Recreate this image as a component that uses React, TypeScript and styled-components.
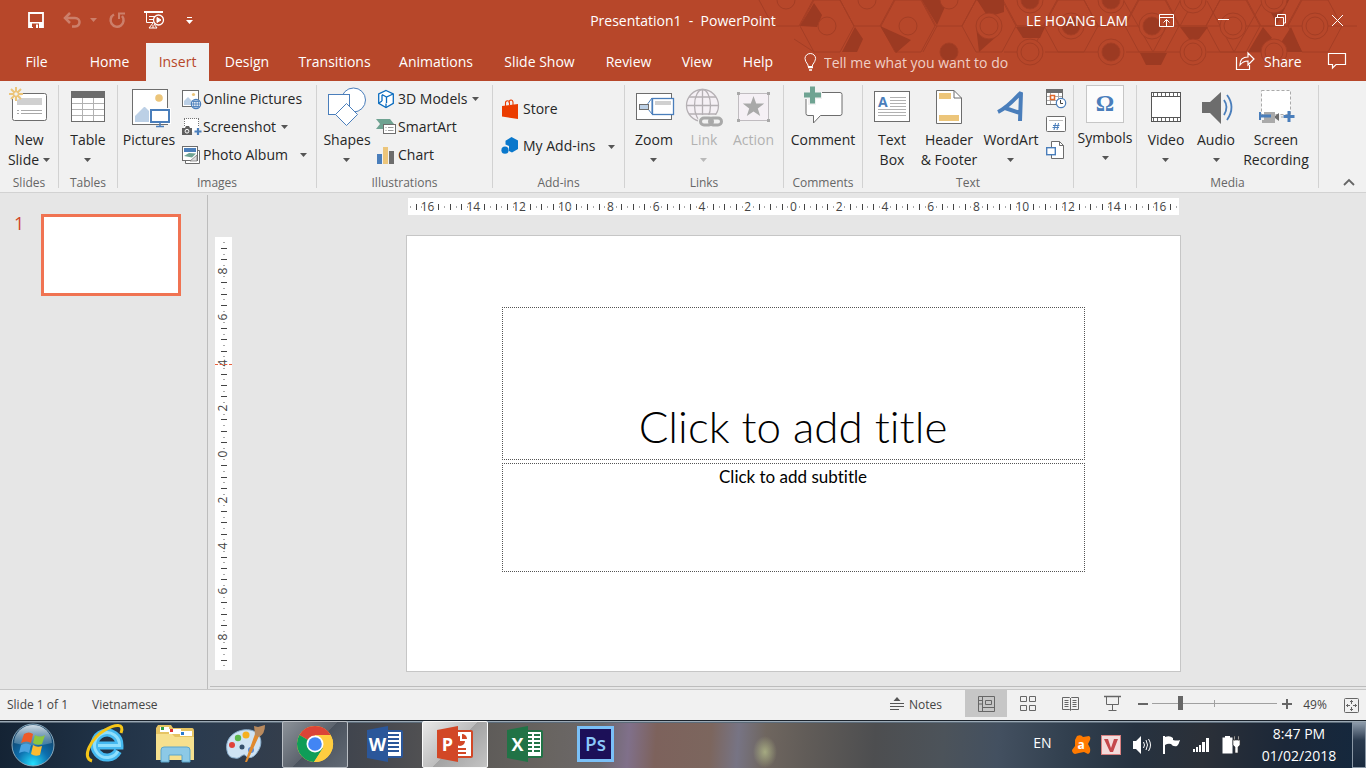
import React from "react";
import styled, { createGlobalStyle, css } from "styled-components";

const GlobalStyle = createGlobalStyle`
  *, *::before, *::after { box-sizing: border-box; }
  body { margin: 0; font-family: "Open Sans", "Noto Sans", sans-serif; font-size: 14px; color: #262626; }
  button { border: 0; background: none; padding: 0; margin: 0; font: inherit; color: inherit; }
  svg { display: block; flex: none; overflow: visible; }
  h1, p { margin: 0; font-weight: 400; }
`;

/* ---------- window frame ---------- */

const Screen = styled.div`
  display: flex;
  flex-direction: column;
  min-height: 100vh;
  background: #e6e6e6;
`;

const Header = styled.header`
  position: relative;
  background: #b7472a;
  color: #fff;
`;

const Pattern = styled.svg`
  position: absolute;
  top: 0;
  right: 0;
`;

const TitleBar = styled.div`
  position: relative;
  display: grid;
  grid-template-columns: 1fr auto 1fr;
  align-items: center;
  height: 40px;
`;

const QuickAccess = styled.div`
  display: flex;
  align-items: center;
  padding-left: 17px;
`;

const QuickButton = styled.button<{ $w: number; $dim?: boolean }>`
  display: flex;
  justify-content: center;
  align-items: center;
  width: ${(p) => p.$w}px;
  height: 40px;
  opacity: ${(p) => (p.$dim ? 0.3 : 1)};
`;

const WindowTitle = styled.div`
  white-space: pre;
`;

const WindowControls = styled.div`
  display: flex;
  justify-content: flex-end;
  align-items: center;
`;

const UserName = styled.span`
  padding-right: 10px;
`;

const WindowButton = styled.button`
  display: flex;
  justify-content: center;
  align-items: center;
  width: 57px;
  height: 40px;
`;

const TabRow = styled.nav`
  position: relative;
  display: flex;
  align-items: stretch;
  height: 41px;
  padding-top: 3px;
`;

const Tab = styled.button<{ $w: number; $active?: boolean }>`
  width: ${(p) => p.$w}px;
  padding-bottom: 2px;
  white-space: nowrap;
  ${(p) => p.$active && css`background: #f1f1f1; color: #b7472a;`}
`;

const TellMe = styled.label`
  display: flex;
  flex: 1;
  align-items: center;
  gap: 7px;
  padding-left: 16px;
`;

const TellMeInput = styled.input`
  width: 220px;
  padding: 0;
  border: 0;
  background: transparent;
  font: inherit;
  color: #fff;
  &::placeholder { color: #f0cfc6; opacity: 1; }
`;

const HeaderAction = styled.button<{ $w: number }>`
  display: flex;
  align-items: center;
  gap: 9px;
  width: ${(p) => p.$w}px;
  padding-bottom: 2px;
`;

/* ---------- ribbon ---------- */

const Ribbon = styled.div`
  display: flex;
  height: 112px;
  background: #f1f1f1;
  border-bottom: 1px solid #d2d2d2;
`;

const GroupBox = styled.section<{ $w: number }>`
  display: flex;
  flex-direction: column;
  flex: 0 0 ${(p) => p.$w}px;
`;

const GroupBody = styled.div<{ $pad: number }>`
  display: flex;
  flex: 1;
  padding: 4px 0 0 ${(p) => p.$pad}px;
`;

const GroupLabel = styled.div`
  height: 19px;
  line-height: 19px;
  font-size: 12px;
  text-align: center;
  color: #666;
`;

const Divider = styled.div`
  flex: 0 0 1px;
  margin: 4px 0;
  background: #d2d2d2;
`;

const BigButton = styled.button<{ $w: number; $dim?: boolean }>`
  display: flex;
  flex-direction: column;
  align-items: center;
  flex: 0 0 ${(p) => p.$w}px;
  gap: 5px;
  line-height: 20px;
  white-space: nowrap;
  color: ${(p) => (p.$dim ? "#b1b1b1" : "inherit")};
`;

const BigLabel = styled.span`
  display: flex;
  flex-direction: column;
  align-items: center;
`;

const LabelLine = styled.span`
  display: flex;
  align-items: center;
  gap: 4px;
  height: 20px;
`;

const SmallColumn = styled.div<{ $left?: number; $top?: number }>`
  display: flex;
  flex-direction: column;
  align-items: flex-start;
  padding: ${(p) => p.$top || 0}px 0 0 ${(p) => p.$left || 0}px;
`;

const SmallButton = styled.button<{ $h: number }>`
  display: flex;
  align-items: center;
  height: ${(p) => p.$h}px;
  gap: 4px;
  white-space: nowrap;
`;

const SmallLabel = styled.span<{ $split?: boolean }>`
  margin-left: -2px;
  padding: 0 ${(p) => (p.$split ? 8 : 1)}px 2px 0;
`;

const SymbolsButton = styled.button`
  display: flex;
  flex-direction: column;
  align-items: center;
  width: 62px;
  line-height: 20px;
`;

const SymbolTile = styled.span`
  display: flex;
  justify-content: center;
  align-items: center;
  width: 38px;
  height: 38px;
  margin-bottom: 5px;
  border: 1px solid #c6c6c6;
  background: #fcfcfc;
  color: #4a7ebb;
  font: bold 23px "Liberation Serif", serif;
`;

const RibbonEnd = styled.div`
  display: flex;
  flex: 1;
  justify-content: flex-end;
  align-items: flex-end;
  padding: 0 11px 6px 0;
`;

/* ---------- workspace ---------- */

const Workspace = styled.main`
  display: flex;
  flex: 1;
  padding-top: 2px;
`;

const Thumbnails = styled.aside`
  display: flex;
  align-items: flex-start;
  flex: 0 0 208px;
  gap: 16px;
  padding: 19px 0 0 14px;
  border-right: 1px solid #bcbcbc;
`;

const ThumbNumber = styled.span`
  width: 11px;
  line-height: 18px;
  font-size: 18px;
  color: #d24726;
`;

const Thumb = styled.button`
  width: 140px;
  height: 82px;
  border: 3px solid #f07352;
  background: #fff;
`;

const Editor = styled.div`
  display: grid;
  grid-template-columns: 17px minmax(0, 1fr);
  grid-template-rows: 20px 20px auto 1fr;
  flex: 1;
  margin: 0 0 2px 2px;
  padding: 0 12px 0 5px;
  border-bottom: 1px solid #bcbcbc;
`;

const RulerSlot = styled.div`
  grid-column: 2;
  display: flex;
  justify-content: center;
  padding-top: 3px;
`;

const HRulerBar = styled.div`
  display: flex;
  width: 100%;
  max-width: 771px;
  height: 17px;
  background: #fff;
`;

const VRulerBar = styled.div`
  grid-column: 1;
  grid-row: 3;
  position: relative;
  width: 17px;
  height: 433px;
  margin-top: 2px;
  overflow: hidden;
  background: #fff;
`;

const VRulerScale = styled.div`
  display: flex;
  flex-direction: column;
  height: 440px;
  margin-top: -3px;
`;

const VMarker = styled.div`
  position: absolute;
  top: 127px;
  left: 0;
  right: 0;
  border-top: 1px dashed #e8603c;
`;

const Cell = styled.span`
  display: flex;
  flex: 1 1 0;
  justify-content: center;
  align-items: center;
  min-width: 0;
  min-height: 0;
`;

const RulerNumber = styled.span<{ $vertical?: boolean }>`
  font-size: 12px;
  line-height: 12px;
  color: #444;
  ${(p) => p.$vertical && css`transform: rotate(-90deg);`}
`;

const Tick = styled.span<{ $vertical?: boolean; $long?: boolean }>`
  flex: none;
  width: ${(p) => (p.$vertical ? (p.$long ? 6 : 2) : 1)}px;
  height: ${(p) => (p.$vertical ? 1 : p.$long ? 6 : 2)}px;
  background: ${(p) => (p.$long ? "#444" : "#aaa")};
`;

const SlideSlot = styled.div`
  grid-column: 2;
  grid-row: 3;
  display: flex;
  justify-content: center;
`;

const Slide = styled.article`
  display: flex;
  flex-direction: column;
  align-items: center;
  gap: 3px;
  width: 100%;
  max-width: 775px;
  height: 437px;
  padding-top: 71px;
  border: 1px solid #c6c6c6;
  background: #fff;
  color: #000;
  font-family: Lato, sans-serif;
  font-variant-ligatures: none;
  text-align: center;
`;

const holder = css`
  width: 583px;
  max-width: 100%;
  border: 1px dotted #555;
`;

const TitleHolder = styled.h1`
  ${holder}
  display: flex;
  justify-content: center;
  align-items: flex-end;
  height: 153px;
  padding-bottom: 6px;
  font-size: 44px;
  font-weight: 300;
  line-height: 54px;
`;

const SubtitleHolder = styled.p`
  ${holder}
  height: 109px;
  padding-top: 3px;
  font-size: 17px;
  line-height: 20px;
`;

/* ---------- status bar ---------- */

const StatusBar = styled.footer`
  display: flex;
  align-items: stretch;
  height: 31px;
  border-top: 1px solid #c6c6c6;
  background: #f1f1f1;
  font-size: 12px;
  color: #444;
`;

const StatusText = styled.button`
  padding: 0 12px 2px;
  &:first-child { padding-left: 7px; }
`;

const StatusRight = styled.div`
  display: flex;
  align-items: stretch;
  margin-left: auto;
`;

const NotesButton = styled.button`
  display: flex;
  align-items: center;
  gap: 5px;
  width: 75px;
  padding-bottom: 2px;
`;

const ViewButton = styled.button<{ $active?: boolean }>`
  display: flex;
  justify-content: center;
  align-items: center;
  width: 42px;
  height: 27px;
  background: ${(p) => (p.$active ? "#c6c6c6" : "transparent")};
`;

const ZoomButton = styled.button`
  display: flex;
  justify-content: center;
  align-items: center;
  width: 19px;
`;

const ZoomSlider = styled.input`
  appearance: none;
  width: 125px;
  margin: 6px 0 10px;
  background:
    linear-gradient(#a0a0a0, #a0a0a0) center / 1px 7px no-repeat,
    linear-gradient(#a0a0a0, #a0a0a0) center / 100% 1px no-repeat;
  &::-webkit-slider-thumb { appearance: none; width: 5px; height: 14px; background: #666; }
`;

const ZoomValue = styled.button`
  width: 38px;
  padding-bottom: 2px;
`;

const FitButton = styled.button`
  display: flex;
  align-items: center;
  width: 32px;
  padding-left: 10px;
`;

/* ---------- desktop task bar ---------- */

const Taskbar = styled.div`
  display: flex;
  height: 48px;
  border-top: 1px solid #1b232c;
  color: #fff;
  box-shadow: inset 0 1px #9aa8b4, inset 0 2px #5b6a78;
  background:
    radial-gradient(ellipse 12px 16px at 56% 66%, #b3bb8acc, transparent),
    linear-gradient(94deg, #142334 0%, #1f3145 7%, #2a3b4f 14%, #343e4c 21%, #47494f 28%, #5a5856 34%, #686460 40%, #6c686a 44%, #80708a 46%, #7d625c 48%, #7c665e 52%, #777484 54%, #6f665f 56%, #615c58 59%, #4d4e50 64%, #4c535a 69%, #435060 73%, #32404f 78%, #263240 83%, #2b3038 88%, #1b2738 94%, #14283e 100%);
`;

const StartButton = styled.button`
  width: 68px;
  padding-left: 11px;
`;

const TaskButton = styled.button<{ $state?: "open" | "active" }>`
  display: flex;
  justify-content: center;
  align-items: center;
  width: 66px;
  height: 47px;
  margin-left: 4px;
  border-radius: 2px;
  padding-bottom: 2px;
  ${(p) =>
    p.$state === "open" &&
    css`border: 1px solid #b9bec4; background: linear-gradient(135deg, #8c9299, #5d646e 50%, #4b535e 50%, #626a75);`}
  ${(p) =>
    p.$state === "active" &&
    css`border: 1px solid #fafafa; background: linear-gradient(135deg, #e8e8e8, #bdbdbd 50%, #a3a3a3 50%, #c4c4c4);`}
`;

const Tray = styled.div`
  display: flex;
  align-items: center;
  margin-left: auto;
`;

const Language = styled.button`
  width: 47px;
  padding-bottom: 4px;
`;

const TrayButton = styled.button`
  display: flex;
  justify-content: center;
  align-items: center;
  width: 30px;
`;

const Clock = styled.button`
  width: 106px;
  line-height: 22px;
`;

const ShowDesktop = styled.button`
  align-self: stretch;
  width: 14px;
  margin-top: 1px;
  border: 1px solid #8a97a5;
  background: linear-gradient(#8a98a8, #2a3a4e 40%, #1a2a3e);
`;

/* ---------- drawings ---------- */

const G = "#6d6d6d";
const B = "#4a7ebb";
const Y = "#ecc57a";
const L = "#bcd0e6";
const T = "#6fa392";

const Caret = ({ color = "#555" }: { color?: string }) => (
  <svg width="7" height="4" viewBox="0 0 7 4"><path d="M0 0h7L3.500 4z" fill={color} /></svg>
);

const Big = ({ children }: { children: React.ReactNode }) => (
  <svg width="40" height="40" viewBox="0 0 40 40" fill="none">{children}</svg>
);

const Sm = ({ children }: { children: React.ReactNode }) => (
  <svg width="20" height="20" viewBox="0 0 20 20" fill="none">{children}</svg>
);

const NewSlideIcon = () => (
  <Big>
    <rect x="3.500" y="8.500" width="34" height="27" rx="2" fill="#fff" stroke={G} />
    <rect x="8" y="13" width="25" height="7" fill="#d0d0d0" />
    <path d="M8 25.500h2M12 25.500h21M8 28.500h2M12 28.500h21" stroke="#a8a8a8" />
    <circle cx="7" cy="9" r="6" fill="#f1f1f1" />
    <path d="M7 2v5M7 11v5M0 9h5M9 9h5M2 4l3.500 3.500M8.500 10.500L12 14M12 4L8.500 7.500M5.500 10.500L2 14" stroke={Y} strokeWidth="2" />
    <circle cx="7" cy="9" r="2.500" stroke={Y} strokeWidth="1.500" />
  </Big>
);

const TableIcon = () => (
  <Big>
    <rect x="3.500" y="6.500" width="33" height="30" fill="#fff" stroke={G} />
    <rect x="3" y="6" width="34" height="7" fill={G} />
    <path d="M4 18.500h32M4 24.500h32M4 30.500h32M14.500 13v23M25.500 13v23" stroke="#b1b1b1" />
  </Big>
);

const PicturesIcon = () => (
  <Big>
    <rect x="3.500" y="4.500" width="35" height="35" fill="#fff" stroke={G} />
    <circle cx="30" cy="13" r="3.800" fill={Y} />
    <path d="M6 37V31l9-9 1 0 8 8v7z" fill={L} />
    <rect x="20" y="23" width="22" height="16" fill="#fff" />
    <rect x="22" y="25" width="18" height="12" fill="#fff" stroke={B} strokeWidth="2" />
    <path d="M31 38v3M27 41.500h8" stroke={B} strokeWidth="1.500" />
  </Big>
);

const OnlinePicturesIcon = () => (
  <Sm>
    <rect x="1.500" y="1.500" width="16" height="16" fill="#fff" stroke={G} />
    <circle cx="12.500" cy="5.500" r="1.600" fill={Y} />
    <path d="M3 16v-4l4-4 4 4v4z" fill={L} />
    <circle cx="15" cy="15" r="4.600" fill="#fff" stroke={B} strokeWidth="1.300" />
    <path d="M10.500 15h9M15 10.500v9M11.500 12.500h7M11.500 17.500h7" stroke={B} strokeWidth=".9" />
    <ellipse cx="15" cy="15" rx="2.400" ry="4.600" stroke={B} strokeWidth=".9" />
  </Sm>
);

const ScreenshotIcon = () => (
  <Sm>
    <rect x="3" y="2" width="15" height="13" fill="#fff" />
    <path d="M3 1.500h15M3.500 2v8M17.500 2v8" stroke="#777" strokeDasharray="1 1" />
    <path d="M1 11h3l1-2h3l1 2h2v7H1z" fill="#5f5f5f" />
    <circle cx="6" cy="14.200" r="1.900" fill={G} stroke="#fff" />
    <path d="M17 11v7M13.500 14.500h7" stroke={B} strokeWidth="2.200" />
  </Sm>
);

const PhotoAlbumIcon = () => (
  <Sm>
    <path d="M4.500 5.500h14v13H4.500z" fill="#fff" stroke={G} />
    <rect x="1.500" y="1.500" width="15" height="14" fill="#fff" stroke={G} />
    <rect x="3" y="3" width="12" height="4" fill={B} />
    <path d="M3 11l5-3 7 .5-4 4z" fill={T} />
    <path d="M9 16l7-6v6z" fill="#ddd" stroke={G} strokeWidth=".7" />
  </Sm>
);

const ShapesIcon = () => (
  <Big>
    <circle cx="26.500" cy="15" r="12" fill="#fff" stroke={B} />
    <rect x="1.500" y="9.500" width="21" height="20" fill="#fff" stroke={B} />
    <path d="M19.500 18.500L30.500 29.500 19.500 40.500 8.500 29.500z" fill="#fff" stroke={B} />
  </Big>
);

const ModelsIcon = () => (
  <Sm>
    <path d="M10 1.500l7.300 3.500v9.400L10 18.500l-7.300-4.100V5z" fill="#fff" stroke="#0a6cbf" strokeWidth="1.300" />
    <path d="M6 5.500l4.500 2.500 6.500-3M10.500 8v6M6 6v6M10 14.500v4M3 14l3-2" stroke="#0a6cbf" strokeWidth="1.300" />
  </Sm>
);

const SmartArtIcon = () => (
  <Sm>
    <path d="M0 2h14l4 5H8v5H0l4-5z" fill={T} />
    <rect x="7.500" y="7.500" width="12" height="9" fill="#fff" stroke={G} />
    <path d="M9.500 10.500h1M12 10.500h5.500M9.500 13.500h1M12 13.500h5.500" stroke="#999" />
  </Sm>
);

const ChartIcon = () => (
  <Sm>
    <path d="M1 9h5v10H1z" fill={B} /><path d="M7 2h5v17H7z" fill={Y} /><path d="M13 6h5v13h-5z" fill={G} />
  </Sm>
);

const StoreIcon = () => (
  <Sm>
    <path d="M1 6l16-2v15L1 16.500z" fill="#eb3c00" />
    <path d="M4.500 6V3c0-3 4-3 4 0v2M8 3c0-4 4-4 4-.5V5" stroke="#eb3c00" strokeWidth="1.100" />
  </Sm>
);

const AddinsIcon = () => (
  <Sm>
    <path d="M10.500 0L17 3.500v8.500l-6 3.500-3-1.500V9L4.500 7.500V3.800z" fill="#0a78cc" />
    <circle cx="4" cy="13.200" r="3.600" fill="#0a78cc" />
  </Sm>
);

const ZoomIcon = () => (
  <Big>
    <rect x="2.500" y="8.500" width="35" height="26" fill="#fff" stroke={G} />
    <path d="M14 18.500l4-5.500v16l-4-5z" fill="#fff" stroke={B} />
    <rect x="5.500" y="19.500" width="9" height="5" fill={L} stroke={G} />
    <rect x="18.500" y="13.500" width="21" height="16" fill="#fff" stroke={B} strokeWidth="1.300" />
    <rect x="21" y="16" width="16" height="4" fill="#d0d0d0" />
  </Big>
);

const LinkIcon = () => (
  <Big>
    <g stroke="#b5b0b4" strokeWidth="1.300">
      <circle cx="18.500" cy="20.500" r="16" fill="#f5f0f5" />
      <ellipse cx="18.500" cy="20.500" rx="8" ry="16" />
      <path d="M18.500 4.500v32M2.500 20.500h32M5 12h27M5 29h27" />
    </g>
    <path d="M17 30h20q4 1 4 6t-4 6H17q-3-1-3-6t3-6z" fill="#f1f1f1" />
    <g stroke="#a9a9a9" strokeWidth="3">
      <rect x="16.500" y="33" width="12" height="7" rx="3.500" />
      <rect x="25.500" y="33" width="12" height="7" rx="3.500" />
    </g>
  </Big>
);

const ActionIcon = () => (
  <Big>
    <rect x="4.500" y="8.500" width="30" height="27" fill="#f5f0f5" stroke="#c0bcc0" />
    <path d="M3 7h3v3H3zM33 7h3v3h-3zM3 34h3v3H3zM33 34h3v3h-3z" fill="#a9a9a9" />
    <path d="M19.500 11l2.700 7.600h8l-6.400 4.800 2.400 7.600-6.700-4.600-6.700 4.600 2.400-7.600-6.400-4.800h8z" fill="#a9a9a9" />
  </Big>
);

const CommentIcon = () => (
  <Big>
    <path d="M5 7.500h32q2 0 2 2v19q0 2-2 2H17.500L10.500 38v-7.500H5q-2 0-2-2v-19q0-2 2-2z" fill="#fff" stroke={G} />
    <path d="M5 0h8v6h6v8h-6v6H5v-6h-7V6h7z" fill="#f1f1f1" />
    <path d="M9.500 1.500v17M1 10h17" stroke={T} strokeWidth="5" />
  </Big>
);

const TextBoxIcon = () => (
  <Big>
    <rect x="2.500" y="6.500" width="35" height="30" fill="#fff" stroke={G} />
    <text x="6" y="22" fontFamily="Open Sans, sans-serif" fontWeight="700" fontSize="14" fill={B}>A</text>
    <path d="M18 12.500h16M18 15.500h16M18 18.500h16M18 21.500h16M6 24.500h28M6 27.500h28M6 30.500h28" stroke="#b1b1b1" />
  </Big>
);

const HeaderFooterIcon = () => (
  <Big>
    <path d="M7.500 5.500H25l7.500 7.500v25.500h-25z" fill="#fff" stroke={G} />
    <path d="M25 5.500v7.500h7.500" stroke={G} />
    <path d="M10 8h12v6H10zM10 30h20v6H10z" fill={Y} />
  </Big>
);

const WordArtIcon = () => (
  <Big>
    <path d="M7 27C16 23 23 15 30 7.500L29 36M14 23l15 5" stroke={B} strokeWidth="4" strokeLinejoin="bevel" />
  </Big>
);

const DateIcon = () => (
  <Sm>
    <rect x=".5" y="2.500" width="16" height="14" fill="#fff" stroke={G} />
    <path d="M0 1h17v4H0z" fill={G} />
    <path d="M4.500 5v11M12.500 5v11M1 8.500h15M1 12.500h15" stroke="#aaa" />
    <rect x="4.500" y="7.500" width="4" height="4" fill="#fff" stroke="#e0692c" strokeWidth="1.500" />
    <circle cx="15" cy="15" r="4.700" fill="#fff" stroke={B} strokeWidth="1.200" />
    <path d="M14.500 12v3.500H17" stroke="#444" />
  </Sm>
);

const SlideNumberIcon = () => (
  <Sm>
    <rect x=".5" y="2.500" width="19" height="15" rx="1" fill="#fff" stroke={G} />
    <path d="M3 6.500h14" stroke="#bbb" />
    <path d="M8 16l1.500-7M11 16l1.500-7M7 11.500h6.500M6.500 13.500H13" stroke={B} />
  </Sm>
);

const ObjectIcon = () => (
  <Sm>
    <path d="M5.500 1.500h8l4 4v13h-12z" fill="#fff" stroke={G} />
    <path d="M13.500 1.500v4h4" stroke={G} />
    <rect x=".7" y="7.700" width="8.600" height="7" fill="#fff" stroke={B} strokeWidth="1.400" />
  </Sm>
);

const VideoIcon = () => (
  <Big>
    <rect x="5.500" y="7.500" width="29" height="29" fill="#fff" stroke="#555" />
    <path d="M7 9.500h27M7 34.500h27" stroke="#666" strokeWidth="3" strokeDasharray="1 3" />
    <path d="M6 11.500h28M6 32.500h28" stroke="#555" />
  </Big>
);

const AudioIcon = () => (
  <Big>
    <path d="M6 17h8L25 7v32L14 28H6z" fill={G} />
    <path d="M28 15q5 7 0 15" stroke={B} strokeWidth="1.800" />
    <path d="M31 10q9 12 0 25" stroke={B} strokeWidth="1.800" />
  </Big>
);

const ScreenRecordingIcon = () => (
  <Big>
    <rect x="5.500" y="5.500" width="29" height="24" fill="#fff" stroke="#aaa" strokeDasharray="3 2" />
    <path d="M8 27h11v11H6v-3h2z" fill="#aaa" />
    <path d="M4 27v8" stroke={B} strokeWidth="2" />
    <path d="M4 31h11" stroke={B} strokeWidth="3" />
    <path d="M19 31l4-3v8l-4-3z" fill={G} />
    <path d="M25 32h2" stroke="#aaa" />
    <path d="M33 26v11M27.500 31.500h11" stroke={B} strokeWidth="3" />
  </Big>
);

const hexes = Array.from({ length: 14 }, (_, i) => {
  const x = 6 + i * 41 - Math.round(i / 3);
  return i % 2 ? [[x, 26]] : [[x, 0], [x, 52]];
}).flat().filter(([x, y]) => !(y === 52 && x < 150));

const solid = ["169,51", "251,0", "292,26", "332,0", "332,51", "373,26"];

const HeaderPattern = () => (
  <Pattern width="586" height="81" viewBox="0 0 586 81" fill="none" aria-hidden="true">
    <g stroke="#a43e25">
      {hexes.map(([x, y]) => (
        <g key={`${x}-${y}`}>
          {y < 52 && <path d={`M${x - 27} ${y}L${x - 13} ${y - 26}H${x + 13}L${x + 27} ${y}L${x + 13} ${y + 26}H${x - 13}z`} />}
        </g>
      ))}
      <path d="M14 39l20 13M143 52l14-26M224 52h24M265 52h54M346 52h55M427 52h54M237 26h340M344 1l29 51 27-51M427 1l27 51 29-51M265 26l-14 26M414 0l-14 26" />
    </g>
    <g fill="#9c3a22">
      <path d="M34 3L20 26l17 1 5-12zM75 27L62 52h15l6-13zM100 26l31 14-15 13zM142 0h26l-11 25zM197 0h27v12l-16 5zM196 26l21 10-18 16zM236 27h29l-5 11h-17zM360 53h27l-6 12h-15zM400 27h28l-9 12h-10zM483 27l-15 25h20q-2-10 4-14zM511 27l11 25h-23l3-11zM484 0h25l-12 24z" />
    </g>
    <g stroke="#a43e25">
      {hexes.map(([x, y]) => (
        <g key={`${x}-${y}`}>
          {x > 190 && <circle cx={x} cy={y} r="13" fill="#b7472a" />}
          <circle cx={x} cy={y} r="9" fill={solid.some((c) => Math.abs(+c.split(",")[0] - x) < 5 && Math.abs(+c.split(",")[1] - y) < 3) ? "#9c3a22" : "#b7472a"} />
        </g>
      ))}
    </g>
  </Pattern>
);

const SaveIcon = () => (
  <svg width="16" height="16" viewBox="0 0 16 16" fill="none"><path d="M1 1h14v14H1z" stroke="#fff" strokeWidth="1.800" /><path d="M1 10h14v5H1z" fill="#fff" /><path d="M4 11.500h7V16H4z" fill="#b7472a" /><path d="M8 12.500h2V16H8zM4 15h1v1H4z" fill="#fff" /></svg>
);
const UndoIcon = () => (
  <svg width="18" height="16" viewBox="0 0 18 16" fill="none"><path d="M2 6h10c6 0 6 8 0 8.500H9" stroke="#fff" strokeWidth="2.500" /><path d="M7 1L2 6l5 5" stroke="#fff" strokeWidth="2.500" /></svg>
);
const RedoIcon = () => (
  <svg width="17" height="16" viewBox="0 0 17 16" fill="none"><path d="M5 2.500A6.500 6.500 0 1 0 13 4" stroke="#fff" strokeWidth="2.500" /><path d="M10 7V1.500h6" stroke="#fff" strokeWidth="2" /></svg>
);
const SlideShowIcon = () => (
  <svg width="20" height="18" viewBox="0 0 20 18" fill="none" stroke="#fff"><path d="M0 1h19" strokeWidth="2" /><path d="M2.500 2v9.500h7M5 5.500h6M5 8.500h5M9 12l-4 5h8l-3-4M9 14v3" /><circle cx="14.500" cy="9" r="5" strokeWidth="1.300" /><path d="M13 6.500l4 2.500-4 2.500z" fill="#fff" /></svg>
);

const OrbIcon = () => (
  <svg width="44" height="44" viewBox="0 0 44 44">
    <defs>
      <radialGradient id="orb" cx="50%" cy="95%" r="85%"><stop offset="0" stopColor="#25e0ff" /><stop offset=".45" stopColor="#0d6fae" /><stop offset="1" stopColor="#123a5c" /></radialGradient>
      <linearGradient id="gloss" x1="0" y1="0" x2="0" y2="1"><stop offset="0" stopColor="#e6f1f8" stopOpacity=".9" /><stop offset="1" stopColor="#8db4cc" stopOpacity=".35" /></linearGradient>
    </defs>
    <circle cx="22" cy="22" r="21" fill="url(#orb)" stroke="#8aaabd" />
    <path d="M3 20a19 18 0 0 1 38 0q-19 5-38 0z" fill="url(#gloss)" />
    <path d="M13 11q5-3 9 0l-2 9q-4-3-10 0z" fill="#ee5a27" />
    <path d="M24 12q5 3 10 0l-3 9q-5 2-9-1z" fill="#8cc63f" />
    <path d="M10 22q5-3 10 0l-2 8q-4-3-10 0z" fill="#4aa3e0" />
    <path d="M22 22q4 3 9 1l-2 9q-5 2-9-1z" fill="#fdbb30" />
  </svg>
);
const IeIcon = () => (
  <svg width="40" height="40" viewBox="0 0 40 40" fill="none">
    <path d="M33 27A12.500 12.500 0 1 1 34.500 21.500H13" stroke="#45b9f0" strokeWidth="8" />
    <path d="M33 27A12.500 12.500 0 1 1 34.500 21.500H13" stroke="#8fdffc" strokeWidth="3" />
    <path d="M7 37C-4 34 6 14 20 6 30 0 40-1 36 9" stroke="#f5c518" strokeWidth="3" />
  </svg>
);
const ExplorerIcon = () => (
  <svg width="40" height="40" viewBox="0 0 40 40">
    <path d="M1 4l2-3h13l2 3h19q2 0 2 3v29H1z" fill="#e6c463" />
    <path d="M5 3h9v5H5zM14 5h12v5H14zM25 7h12v5H25z" fill="#fff" />
    <path d="M6 3h3v3H6z" fill="#2f9e44" /><path d="M15 5h3v3h-3z" fill="#d33" /><path d="M26 8h3v3h-3z" fill="#2a7bd1" />
    <path d="M1 10h16l3 3h19v23H1z" fill="#f6e08e" />
    <path d="M6 38V26q0-3 3-3h23q3 0 3 3v12h-8v-7H14v7z" fill="#8cc9e6" stroke="#5aa5cc" />
  </svg>
);
const PaintIcon = () => (
  <svg width="40" height="40" viewBox="0 0 40 40">
    <path d="M3 30C-3 14 12 4 25 6c12 2 13 14 8 21-4 7-9 8-12 5-3-4-6 4-11 2-4 0-6-2-7-4z" fill="#cfe3f3" stroke="#8bb0cf" />
    <circle cx="17" cy="23" r="2.500" fill="#35506c" /><circle cx="7" cy="21" r="3" fill="#e0413a" /><circle cx="13" cy="14" r="3.200" fill="#5cb84b" /><circle cx="21" cy="11" r="3.500" fill="#f5b021" /><circle cx="26" cy="26" r="3" fill="#5b8bd8" />
    <path d="M20 38l10-28 4 2-12 26z" fill="#e08a2e" /><path d="M29 2l4 1 7-2q0 9-6 12l-4-2z" fill="#b98a5e" />
  </svg>
);
const ChromeIcon = () => (
  <svg width="38" height="38" viewBox="0 0 38 38">
    <circle cx="19" cy="19" r="18" fill="#ffcd40" />
    <path d="M19 19L3.400 10A18 18 0 0 1 34.600 10H19z" fill="#db4437" />
    <path d="M19 19L3.400 10A18 18 0 0 0 18 37l9-14z" fill="#0f9d58" />
    <path d="M19 10h15.600A18 18 0 0 1 18 37l9-14z" fill="#ffcd40" />
    <circle cx="19" cy="19" r="8.500" fill="#fff" /><circle cx="19" cy="19" r="6.800" fill="#4285f4" />
  </svg>
);

const OfficeIcon = ({ color, letter, children }: { color: string; letter: string; children: React.ReactNode }) => (
  <svg width="36" height="36" viewBox="0 0 36 36" fill="none">
    <rect x="19" y="5" width="16" height="26" rx="1" fill="#fff" stroke={color} strokeWidth="2" />
    {children}
    <path d="M0 4L21 0v36L0 32z" fill={color} />
    <text x="10.500" y="25" textAnchor="middle" fontFamily="Open Sans, sans-serif" fontWeight="700" fontSize="18" fill="#fff">{letter}</text>
  </svg>
);

/* ---------- components ---------- */

const Group = ({ w, label, pad = 0, children }: { w: number; label?: string; pad?: number; children: React.ReactNode }) => (
  <>
    <GroupBox $w={w}>
      <GroupBody $pad={pad}>{children}</GroupBody>
      <GroupLabel>{label}</GroupLabel>
    </GroupBox>
    <Divider />
  </>
);

const Large = ({ w, icon, first, second, caret, dim }: { w: number; icon: React.ReactNode; first: string; second?: string; caret?: boolean; dim?: boolean }) => (
  <BigButton $w={w} $dim={dim} disabled={dim}>
    {icon}
    <BigLabel>
      <LabelLine>{first}</LabelLine>
      {(second || caret) && <LabelLine>{second}{caret && <Caret color={dim ? "#b9b9b9" : undefined} />}</LabelLine>}
    </BigLabel>
  </BigButton>
);

const Small = ({ icon, label, caret, split, h = 28 }: { icon: React.ReactNode; label: string; caret?: boolean; split?: boolean; h?: number }) => (
  <SmallButton $h={h}>
    {icon}
    <SmallLabel $split={split}>{label}</SmallLabel>
    {caret && <Caret />}
  </SmallButton>
);

const RulerCells = ({ quarters, vertical }: { quarters: number; vertical?: boolean }) => (
  <>
    {Array.from({ length: quarters * 2 + 1 }, (_, i) => {
      const n = Math.abs(i - quarters);
      return (
        <Cell key={i}>
          {n % 8 === 0 ? (
            <RulerNumber $vertical={vertical}>{n / 4}</RulerNumber>
          ) : (
            <Tick $vertical={vertical} $long={n % 2 === 0} />
          )}
        </Cell>
      );
    })}
  </>
);

const tabs: [string, number][] = [
  ["File", 73], ["Home", 73], ["Insert", 63], ["Design", 76], ["Transitions", 99],
  ["Animations", 104], ["Slide Show", 103], ["Review", 75], ["View", 62], ["Help", 60],
];

export default function App() {
  return (
    <Screen>
      <GlobalStyle />
      <Header>
        <HeaderPattern />
        <TitleBar>
          <QuickAccess>
            <QuickButton $w={38} aria-label="Save"><SaveIcon /></QuickButton>
            <QuickButton $w={34} $dim aria-label="Undo"><UndoIcon /></QuickButton>
            <QuickButton $w={9} $dim aria-label="Undo list"><Caret color="#fff" /></QuickButton>
            <QuickButton $w={38} $dim aria-label="Redo"><RedoIcon /></QuickButton>
            <QuickButton $w={36} aria-label="Start slide show"><SlideShowIcon /></QuickButton>
            <QuickButton $w={34} aria-label="Customize">
              <svg width="7" height="7" viewBox="0 0 7 7"><path d="M1 0h5v1H1zM0 3h7L3.500 7z" fill="#fff" /></svg>
            </QuickButton>
          </QuickAccess>
          <WindowTitle>{"Presentation1  -  PowerPoint"}</WindowTitle>
          <WindowControls>
            <UserName>LE HOANG LAM</UserName>
            <WindowButton aria-label="Ribbon display options">
              <svg width="15" height="13" viewBox="0 0 15 13" fill="none" stroke="#fff"><path d="M.5.5h14v12H.500zM.5 3.500h14M7.500 12V5.500M4.500 8.500l3-3 3 3" /></svg>
            </WindowButton>
            <WindowButton aria-label="Minimize"><svg width="11" height="3" viewBox="0 0 11 3"><path d="M0 0h11v1H0z" fill="#fff" /></svg></WindowButton>
            <WindowButton aria-label="Restore">
              <svg width="11" height="12" viewBox="0 0 11 12" fill="none" stroke="#fff"><path d="M.5 3.500h8v8h-8zM2.500 3V.5h8v8.500H9" /></svg>
            </WindowButton>
            <WindowButton aria-label="Close"><svg width="11" height="11" viewBox="0 0 11 11" stroke="#fff"><path d="M0 0l11 11M11 0L0 11" /></svg></WindowButton>
          </WindowControls>
        </TitleBar>
        <TabRow>
          {tabs.map(([name, w]) => <Tab key={name} $w={w} $active={name === "Insert"}>{name}</Tab>)}
          <TellMe>
            <svg width="13" height="18" viewBox="0 0 13 18" fill="none" stroke="#fff"><path d="M4 13.500V12Q1 8 1 5.500a5.300 5 0 0 1 10.600 0Q11.500 8 8.500 12v1.500z" /><path d="M4 14.500h5M5 17h3" strokeWidth="1.500" /></svg>
            <TellMeInput aria-label="Tell me what you want to do" placeholder="Tell me what you want to do" />
          </TellMe>
          <HeaderAction $w={93}>
            <svg width="20" height="18" viewBox="0 0 20 18" fill="none" stroke="#fff" strokeWidth="1.200"><path d="M1.500 5v12.500h13V13" /><path d="M5 13q0-8 8-8V1l6 6-6 6V9q-5 0-8 4z" /></svg>
            Share
          </HeaderAction>
          <HeaderAction $w={38} aria-label="Comments">
            <svg width="18" height="16" viewBox="0 0 18 16" fill="none" stroke="#fff" strokeWidth="1.200"><path d="M.5.5h17v11H8L4.500 15v-3.500h-4z" /></svg>
          </HeaderAction>
        </TabRow>
      </Header>

      <Ribbon>
        <Group w={58} label="Slides"><Large w={58} icon={<NewSlideIcon />} first="New" second="Slide" caret /></Group>
        <Group w={58} label="Tables"><Large w={58} icon={<TableIcon />} first="Table" caret /></Group>
        <Group w={198} label="Images" pad={3}>
          <Large w={56} icon={<PicturesIcon />} first="Pictures" />
          <SmallColumn $left={4}>
            <Small icon={<OnlinePicturesIcon />} label="Online Pictures" />
            <Small icon={<ScreenshotIcon />} label="Screenshot" caret />
            <Small icon={<PhotoAlbumIcon />} label="Photo Album" caret split />
          </SmallColumn>
        </Group>
        <Group w={175} label="Illustrations" pad={3}>
          <Large w={54} icon={<ShapesIcon />} first="Shapes" caret />
          <SmallColumn $left={2}>
            <Small icon={<ModelsIcon />} label="3D Models" caret />
            <Small icon={<SmartArtIcon />} label="SmartArt" />
            <Small icon={<ChartIcon />} label="Chart" />
          </SmallColumn>
        </Group>
        <Group w={131} label="Add-ins" pad={8}>
          <SmallColumn $top={6}>
            <Small h={37} icon={<StoreIcon />} label="Store" />
            <Small h={37} icon={<AddinsIcon />} label="My Add-ins" caret split />
          </SmallColumn>
        </Group>
        <Group w={158} label="Links" pad={3}>
          <Large w={52} icon={<ZoomIcon />} first="Zoom" caret />
          <Large w={48} icon={<LinkIcon />} first="Link" caret dim />
          <Large w={51} icon={<ActionIcon />} first="Action" dim />
        </Group>
        <Group w={78} label="Comments"><Large w={78} icon={<CommentIcon />} first="Comment" /></Group>
        <Group w={210} label="Text" pad={4}>
          <Large w={50} icon={<TextBoxIcon />} first="Text" second="Box" />
          <Large w={64} icon={<HeaderFooterIcon />} first="Header" second="& Footer" />
          <Large w={60} icon={<WordArtIcon />} first="WordArt" caret />
          <SmallColumn $left={5}>
            <SmallButton $h={26} aria-label="Date and time"><DateIcon /></SmallButton>
            <SmallButton $h={26} aria-label="Slide number"><SlideNumberIcon /></SmallButton>
            <SmallButton $h={26} aria-label="Object"><ObjectIcon /></SmallButton>
          </SmallColumn>
        </Group>
        <Group w={62}>
          <SymbolsButton>
            <SymbolTile>Ω</SymbolTile>
            <LabelLine>Symbols</LabelLine>
            <LabelLine><Caret /></LabelLine>
          </SymbolsButton>
        </Group>
        <Group w={181} label="Media" pad={4}>
          <Large w={50} icon={<VideoIcon />} first="Video" caret />
          <Large w={50} icon={<AudioIcon />} first="Audio" caret />
          <Large w={70} icon={<ScreenRecordingIcon />} first="Screen" second="Recording" />
        </Group>
        <RibbonEnd>
          <button aria-label="Collapse the ribbon">
            <svg width="12" height="8" viewBox="0 0 12 8" fill="none"><path d="M1 7l5-5 5 5" stroke="#666" strokeWidth="1.800" /></svg>
          </button>
        </RibbonEnd>
      </Ribbon>

      <Workspace>
        <Thumbnails>
          <ThumbNumber>1</ThumbNumber>
          <Thumb aria-label="Slide 1" />
        </Thumbnails>
        <Editor>
          <RulerSlot><HRulerBar><RulerCells quarters={67} /></HRulerBar></RulerSlot>
          <VRulerBar>
            <VRulerScale><RulerCells quarters={38} vertical /></VRulerScale>
            <VMarker />
          </VRulerBar>
          <SlideSlot>
            <Slide>
              <TitleHolder>Click to add title</TitleHolder>
              <SubtitleHolder>Click to add subtitle</SubtitleHolder>
            </Slide>
          </SlideSlot>
        </Editor>
      </Workspace>

      <StatusBar>
        <StatusText>Slide 1 of 1</StatusText>
        <StatusText>Vietnamese</StatusText>
        <StatusRight>
          <NotesButton>
            <svg width="14" height="14" viewBox="0 0 14 14"><path d="M7 0l3.500 4h-7zM0 6h14v1H0zM0 9h14v1H0zM0 12h9v1H0z" fill="#555" /></svg>
            Notes
          </NotesButton>
          <ViewButton $active aria-label="Normal view">
            <svg width="17" height="16" viewBox="0 0 17 16" fill="none" stroke="#666"><path d="M.5.5h16v15H.500zM4.500.5v15M4.500 11.500h12M.5 4.500h4M.5 8h4M7.500 4.500h6v4h-6z" /></svg>
          </ViewButton>
          <ViewButton aria-label="Slide sorter">
            <svg width="16" height="15" viewBox="0 0 16 15" fill="none" stroke="#666"><path d="M.5.5h6v5h-6zM9.500.5h6v5h-6zM.5 9.500h6v5h-6zM9.500 9.500h6v5h-6z" /></svg>
          </ViewButton>
          <ViewButton aria-label="Reading view">
            <svg width="17" height="14" viewBox="0 0 17 14" fill="none" stroke="#666"><path d="M.5.5h7l1 1 1-1h7v12h-7l-1 1-1-1h-7zM8.500 1v12M2.500 3.500h4M2.500 5.500h4M2.500 7.500h4M2.500 9.500h4M10.500 3.500h4M10.500 5.500h4M10.500 7.500h4M10.500 9.500h4" /></svg>
          </ViewButton>
          <ViewButton aria-label="Slide show">
            <svg width="17" height="15" viewBox="0 0 17 15" fill="none" stroke="#666"><path d="M0 .5h17" strokeWidth="1.500" /><path d="M2.500 1v7.500h12V1M8.500 9v5M4.500 14.500h8" /></svg>
          </ViewButton>
          <ZoomButton aria-label="Zoom out"><svg width="10" height="7" viewBox="0 0 10 7"><path d="M0 1h10v2H0z" fill="#666" /></svg></ZoomButton>
          <ZoomSlider type="range" min="0" max="100" defaultValue="22" aria-label="Zoom" />
          <ZoomButton aria-label="Zoom in"><svg width="10" height="13" viewBox="0 0 10 13"><path d="M0 4h10v2H0zM4 0h2v10H4z" fill="#666" /></svg></ZoomButton>
          <ZoomValue>49%</ZoomValue>
          <FitButton aria-label="Fit slide to window">
            <svg width="15" height="15" viewBox="0 0 15 15" fill="none" stroke="#666"><rect x=".5" y=".5" width="14" height="14" rx="1" /><path d="M7.500 2v4M7.500 9v4M2 7.500h4M9 7.500h4M6 3.500h3M6 11.500h3M3.500 6v3M11.500 6v3" /></svg>
          </FitButton>
        </StatusRight>
      </StatusBar>

      <Taskbar>
        <StartButton aria-label="Start"><OrbIcon /></StartButton>
        <TaskButton aria-label="Internet Explorer"><IeIcon /></TaskButton>
        <TaskButton aria-label="Explorer"><ExplorerIcon /></TaskButton>
        <TaskButton aria-label="Paint"><PaintIcon /></TaskButton>
        <TaskButton $state="open" aria-label="Chrome"><ChromeIcon /></TaskButton>
        <TaskButton aria-label="Word">
          <OfficeIcon color="#2b579a" letter="W"><path d="M21 9h11M21 13h11M21 17h11M21 21h11M21 25h11" stroke="#2b579a" strokeWidth="2" /></OfficeIcon>
        </TaskButton>
        <TaskButton $state="active" aria-label="PowerPoint">
          <OfficeIcon color="#d24726" letter="P"><path d="M21 23h8M21 27h8" stroke="#d24726" strokeWidth="2" /><path d="M23 10v5h5a5 5 0 1 1-5-5z" fill="#d24726" /><path d="M25 8v5h5a5 5 0 0 0-5-5z" fill="#d24726" /></OfficeIcon>
        </TaskButton>
        <TaskButton aria-label="Excel">
          <OfficeIcon color="#217346" letter="X"><path d="M21 9h4M27 9h6M21 13h4M27 13h6M21 17h4M27 17h6M21 21h4M27 21h6M21 25h4M27 25h6" stroke="#217346" strokeWidth="2" /></OfficeIcon>
        </TaskButton>
        <TaskButton aria-label="Photoshop">
          <svg width="37" height="36" viewBox="0 0 37 36"><rect x="1.500" y="1.500" width="34" height="33" fill="#1c1058" stroke="#7ac0f8" strokeWidth="3" /><text x="18.500" y="25" textAnchor="middle" fontFamily="Open Sans, sans-serif" fontWeight="600" fontSize="19" fill="#8cc8fa">Ps</text></svg>
        </TaskButton>
        <Tray>
          <Language>EN</Language>
          <TrayButton aria-label="Antivirus">
            <svg width="20" height="20" viewBox="0 0 20 20"><path d="M6 1q4-2 6 1l6-1q2 1 1 4l-2 4 2 4q1 5-2 6l-4-2-5 1-4 1q-3-1-3-4l3-4V5z" fill="#ff7a00" /><text x="10" y="14" textAnchor="middle" fontFamily="Open Sans, sans-serif" fontWeight="700" fontSize="12" fill="#fff">a</text></svg>
          </TrayButton>
          <TrayButton aria-label="Keyboard input">
            <svg width="20" height="20" viewBox="0 0 20 20"><rect x=".5" y=".5" width="19" height="19" fill="#f3dcdc" stroke="#d98080" /><path d="M3 4h4l3 9 3-9h4l-5 13H9z" fill="#c4474b" /></svg>
          </TrayButton>
          <TrayButton aria-label="Volume">
            <svg width="19" height="18" viewBox="0 0 19 18" fill="none"><path d="M1 5h3l5-5v18l-5-5H1z" fill="#fff" /><path d="M11.500 6q2 3 0 6M14 4q3 5 0 10M16.500 3q4 6 0 12" stroke="#fff" /></svg>
          </TrayButton>
          <TrayButton aria-label="Action center">
            <svg width="19" height="18" viewBox="0 0 19 18"><path d="M1 0h2v18H1zM3 1q5-2 8 1v2q4 1 7 0-1 4-3 6-4 1-6-2-3-1-6 1z" fill="#fff" /></svg>
          </TrayButton>
          <TrayButton aria-label="Network">
            <svg width="16" height="14" viewBox="0 0 16 14"><path d="M0 11h2v3H0zM3 9h2v5H3zM6 7h2v7H6zM9 4h3v10H9zM13 0h3v14h-3z" fill="#fff" /></svg>
          </TrayButton>
          <TrayButton aria-label="Battery">
            <svg width="19" height="19" viewBox="0 0 19 19" fill="none"><path d="M3 1h5v2H3z" fill="#fff" /><rect x="1" y="3" width="9" height="15" fill="#fff" stroke="#fff" /><path d="M11 5h7v5l-2 2v6h-3v-6l-2-2zM12 1h1v4h-1zM16 1h1v4h-1z" fill="#fff" stroke="#333" strokeWidth=".6" /></svg>
          </TrayButton>
          <Clock>8:47 PM<br />01/02/2018</Clock>
          <ShowDesktop aria-label="Show desktop" />
        </Tray>
      </Taskbar>
    </Screen>
  );
}
